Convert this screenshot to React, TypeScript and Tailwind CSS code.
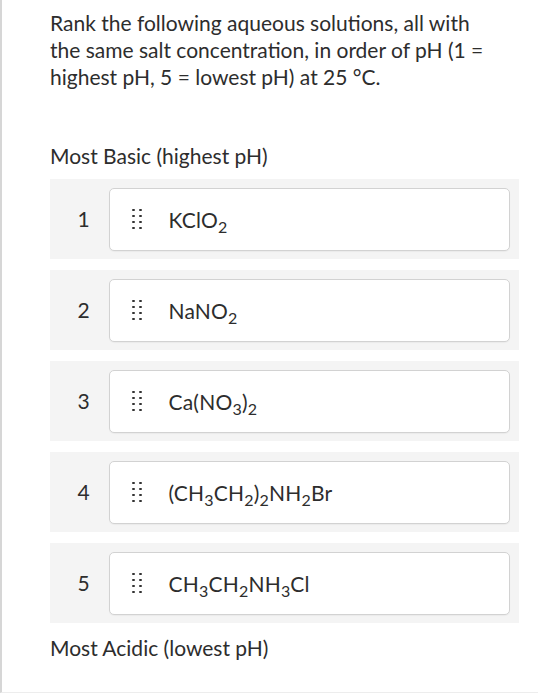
import React from 'react';

type Part = { t: string; sub?: boolean };

const items: Part[][] = [
  [{ t: 'KClO' }, { t: '2', sub: true }],
  [{ t: 'NaNO' }, { t: '2', sub: true }],
  [{ t: 'Ca(NO' }, { t: '3', sub: true }, { t: ')' }, { t: '2', sub: true }],
  [
    { t: '(CH' },
    { t: '3', sub: true },
    { t: 'CH' },
    { t: '2', sub: true },
    { t: ')' },
    { t: '2', sub: true },
    { t: 'NH' },
    { t: '2', sub: true },
    { t: 'Br' },
  ],
  [
    { t: 'CH' },
    { t: '3', sub: true },
    { t: 'CH' },
    { t: '2', sub: true },
    { t: 'NH' },
    { t: '3', sub: true },
    { t: 'Cl' },
  ],
];

function DragHandle() {
  return (
    <div className="grid grid-cols-2 gap-x-[4.5px] gap-y-[3.5px]">
      {Array.from({ length: 8 }).map((_, i) => (
        <span key={i} className="block h-[2.5px] w-[2.5px] rounded-full bg-[#333]" />
      ))}
    </div>
  );
}

function Formula({ parts }: { parts: Part[] }) {
  return (
    <span className="tracking-[0.2px]">
      {parts.map((p, i) =>
        p.sub ? (
          <span key={i} className="relative top-[5px] text-[16px]">
            {p.t}
          </span>
        ) : (
          <span key={i}>{p.t}</span>
        )
      )}
    </span>
  );
}

export default function App() {
  return (
    <div className="h-[693px] bg-white border-l-2 border-b border-l-[#d6d6d6] border-b-[#ededed] pl-[48px] pr-[19px] text-[#2d2d2d] font-['Lato','Liberation_Sans',sans-serif]">
      <p className="pt-[9px] text-[21px] leading-[27px] whitespace-nowrap">
        Rank the following aqueous solutions, all with
        <br />
        the same salt concentration, in order of pH (1 =
        <br />
        highest pH, 5 = lowest pH) at 25 °C.
      </p>

      <p className="mt-[52px] text-[21px] leading-[27px]">Most Basic (highest pH)</p>

      <div className="mt-[10px] flex flex-col gap-[11px]">
        {items.map((parts, i) => (
          <div key={i} className="flex h-[80px] items-center bg-[#f4f4f4]">
            <div className="w-[59px] pl-[8px] text-center text-[21px]">{i + 1}</div>
            <div className="mr-[9px] flex h-[63px] flex-1 items-center rounded-[5px] border border-[#d2d2d2] bg-white pl-[22px] shadow-[0_1px_1px_rgba(0,0,0,0.04)]">
              <DragHandle />
              <div className="ml-[27px] text-[21px] leading-none">
                <Formula parts={parts} />
              </div>
            </div>
          </div>
        ))}
      </div>

      <p className="mt-[11px] text-[21px] leading-[27px]">Most Acidic (lowest pH)</p>
    </div>
  );
}
